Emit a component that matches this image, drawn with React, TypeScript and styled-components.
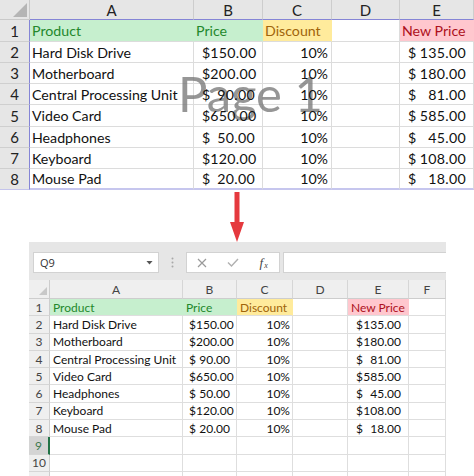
import React from 'react';
import styled, { createGlobalStyle } from 'styled-components';

const FONT = `Lato, "Open Sans", Arial, sans-serif`;

const GlobalStyle = createGlobalStyle`
  html, body { margin: 0; padding: 0; background: #ffffff; }
  body { font-family: ${FONT}; }
`;

type Row = { name: string; price: string; disc: string; np: string };

const ROWS: Row[] = [
  { name: 'Hard Disk Drive', price: '150.00', disc: '10%', np: '135.00' },
  { name: 'Motherboard', price: '200.00', disc: '10%', np: '180.00' },
  { name: 'Central Processing Unit', price: '90.00', disc: '10%', np: '81.00' },
  { name: 'Video Card', price: '650.00', disc: '10%', np: '585.00' },
  { name: 'Headphones', price: '50.00', disc: '10%', np: '45.00' },
  { name: 'Keyboard', price: '120.00', disc: '10%', np: '108.00' },
  { name: 'Mouse Pad', price: '20.00', disc: '10%', np: '18.00' },
];

const GOOD = { bg: '#c6efce', fg: '#23882c' };
const NEUTRAL = { bg: '#ffeb9c', fg: '#a0640a' };
const BAD = { bg: '#ffc7ce', fg: '#ad1020' };

const PURPLE = '#8585d6';

const Page = styled.div`
  width: 474px;
  height: 476px;
  overflow: hidden;
  background: #ffffff;
  display: flex;
  flex-direction: column;
  font-family: ${FONT};
  color: #111;
`;

/* ---------- top sheet (page break preview) ---------- */

const TopGrid = styled.div`
  position: relative;
  display: grid;
  grid-template-columns: 30px 164px 69px 69px 68px 74px;
  grid-template-rows: 20px 22px 21px 21px 21px 22px 21px 21px 21px;
  font-size: 14.2px;
  flex: none;
`;

const TopCorner = styled.div`
  background: #e6e6e6;
  border-right: 1px solid #c9c9c9;
  border-bottom: 1px solid #c9c9c9;
  box-sizing: border-box;
  display: flex;
  align-items: flex-end;
  justify-content: flex-end;
  padding: 0 2px 2px 0;
`;

const Triangle = styled.div<{ $size: number; $color: string }>`
  width: ${(p) => p.$size}px;
  height: ${(p) => p.$size}px;
  background: ${(p) => p.$color};
  clip-path: polygon(100% 0, 100% 100%, 0 100%);
`;

const TopColHead = styled.div`
  background: #e6e6e6;
  border-right: 1px solid #cdcdcd;
  border-bottom: 1px solid ${PURPLE};
  box-sizing: border-box;
  display: flex;
  align-items: center;
  justify-content: center;
  color: #222;
  font-size: 15px;
`;

const TopRowHead = styled.div<{ $last?: boolean }>`
  background: #e6e6e6;
  border-right: 1px solid ${PURPLE};
  border-bottom: 1px solid ${(p) => (p.$last ? '#c4c4ec' : '#cfcfcf')};
  box-sizing: border-box;
  display: flex;
  align-items: center;
  justify-content: center;
  color: #222;
  font-size: 15px;
`;

type Align = 'left' | 'right' | 'acct';

const Cell = styled.div<{
  $fill?: string;
  $fg?: string;
  $align?: Align;
  $last?: boolean;
  $padL: number;
  $padR: number;
  $line: string;
}>`
  background: ${(p) => p.$fill ?? '#ffffff'};
  color: ${(p) => p.$fg ?? '#111'};
  border-right: 1px solid ${(p) => p.$fill ?? p.$line};
  border-bottom: ${(p) => (p.$last ? `2px solid #c6c6ee` : `1px solid ${p.$line}`)};
  box-sizing: border-box;
  display: flex;
  align-items: center;
  justify-content: ${(p) =>
    p.$align === 'right' ? 'flex-end' : p.$align === 'acct' ? 'space-between' : 'flex-start'};
  padding: 0 ${(p) => p.$padR}px 0 ${(p) => p.$padL}px;
  white-space: nowrap;
`;

/* text sits above the watermark, cell fills below it */
const CellText = styled.span<{ $num?: boolean }>`
  position: relative;
  z-index: 1;
  letter-spacing: ${(p) => (p.$num ? '0.3px' : 'normal')};
`;

const Watermark = styled.div`
  position: absolute;
  left: 178px;
  top: 69px;
  font-size: 49px;
  line-height: 1;
  color: rgba(120, 120, 120, 0.78);
  pointer-events: none;
  z-index: 0;
  white-space: nowrap;
`;

/* ---------- arrow ---------- */

const ArrowRow = styled.div`
  height: 52px;
  flex: none;
  display: flex;
  padding-left: 229px;
`;

/* ---------- lower (normal view) ---------- */

const Lower = styled.div`
  margin-left: 29px;
  width: 417px;
  display: flex;
  flex-direction: column;
  flex: none;
`;

const FormulaBar = styled.div`
  height: 38px;
  background: #e6e6e6;
  box-sizing: border-box;
  padding: 10px 0 0 4px;
  display: flex;
  align-items: flex-start;
`;

const NameBox = styled.div`
  width: 126px;
  height: 21px;
  box-sizing: border-box;
  background: #ffffff;
  border: 1px solid #d2d2d2;
  display: flex;
  align-items: center;
  justify-content: space-between;
  padding: 0 5px 0 6px;
  font-family: "Open Sans", Arial, sans-serif;
  font-size: 11px;
  color: #333;
`;

const DropTri = styled.span`
  width: 7px;
  height: 4px;
  background: #555;
  clip-path: polygon(0 0, 100% 0, 50% 100%);
`;

const Grip = styled.div`
  width: 27px;
  height: 21px;
  display: flex;
  align-items: center;
  justify-content: center;
`;

const FxButtons = styled.div`
  width: 94px;
  height: 21px;
  box-sizing: border-box;
  background: #ffffff;
  border: 1px solid #d2d2d2;
  display: grid;
  grid-template-columns: repeat(3, 1fr);
  align-items: center;
  justify-items: center;
`;

const FxLabel = styled.span`
  font-family: "Liberation Serif", "DejaVu Serif", serif;
  font-style: italic;
  font-size: 13px;
  color: #444;
  line-height: 1;
  display: flex;
  align-items: baseline;
  & > sub {
    font-size: 8px;
    vertical-align: baseline;
    margin-left: 1px;
    position: relative;
    top: 1px;
  }
`;

const FormulaInput = styled.div`
  flex: 1;
  margin-left: 3px;
  height: 21px;
  box-sizing: border-box;
  background: #ffffff;
  border: 1px solid #d2d2d2;
  border-right: none;
`;

const LowGrid = styled.div`
  display: grid;
  grid-template-columns: 21px 133px 54px 56px 55px 61px 37px;
  grid-template-rows: 19px repeat(11, 17.3px);
  font-size: 12px;
`;

const LowCorner = styled.div`
  background: #efefef;
  border-right: 1px solid #cdcdcd;
  border-bottom: 1px solid #cdcdcd;
  box-sizing: border-box;
  display: flex;
  align-items: flex-end;
  justify-content: flex-end;
  padding: 0 2px 3px 0;
`;

const LowColHead = styled.div`
  background: #efefef;
  border-right: 1px solid #d6d6d6;
  border-bottom: 1px solid #cdcdcd;
  box-sizing: border-box;
  display: flex;
  align-items: center;
  justify-content: center;
  color: #444;
  font-size: 12px;
`;

const LowRowHead = styled.div<{ $selected?: boolean }>`
  background: ${(p) => (p.$selected ? '#d4d4d4' : '#efefef')};
  color: ${(p) => (p.$selected ? '#3f7a4f' : '#444')};
  border-right: ${(p) => (p.$selected ? '2px solid #217346' : '1px solid #cdcdcd')};
  border-bottom: 1px solid #d6d6d6;
  box-sizing: border-box;
  display: flex;
  align-items: center;
  justify-content: center;
  font-size: 12px;
`;

/* ---------- helpers ---------- */

type Metrics = { textL: number; numR: number; acctL: number; acctR: number; line: string; num: boolean };

const TOP_M: Metrics = { textL: 2, numR: 3, acctL: 8, acctR: 7, line: '#dcdcdc', num: true };
const LOW_M: Metrics = { textL: 3, numR: 2, acctL: 6, acctR: 6, line: '#dedede', num: false };
const LOW_E: Metrics = { ...LOW_M, acctL: 8, acctR: 7 };

function BodyCells({ row, m, mE, last, extraCols }: { row: Row | null; m: Metrics; mE: Metrics; last?: boolean; extraCols: number }) {
  const common = { $line: m.line, $last: last };
  return (
    <>
      <Cell {...common} $padL={m.textL} $padR={0}>
        {row && <CellText>{row.name}</CellText>}
      </Cell>
      <Cell {...common} $align="acct" $padL={m.acctL} $padR={m.acctR}>
        {row && <CellText>$</CellText>}
        {row && <CellText $num={m.num}>{row.price}</CellText>}
      </Cell>
      <Cell {...common} $align="right" $padL={0} $padR={m.numR}>
        {row && <CellText>{row.disc}</CellText>}
      </Cell>
      <Cell {...common} $padL={0} $padR={0} />
      <Cell {...common} $align="acct" $padL={mE.acctL} $padR={mE.acctR}>
        {row && <CellText>$</CellText>}
        {row && <CellText $num={m.num}>{row.np}</CellText>}
      </Cell>
      {Array.from({ length: extraCols }).map((_, i) => (
        <Cell key={i} {...common} $padL={0} $padR={0} />
      ))}
    </>
  );
}

function HeaderCells({ m, extraCols }: { m: Metrics; extraCols: number }) {
  return (
    <>
      <Cell $line={m.line} $fill={GOOD.bg} $fg={GOOD.fg} $padL={m.textL} $padR={0}>
        <CellText>Product</CellText>
      </Cell>
      <Cell $line={m.line} $fill={GOOD.bg} $fg={GOOD.fg} $padL={m.textL} $padR={0}>
        <CellText>Price</CellText>
      </Cell>
      <Cell $line={m.line} $fill={NEUTRAL.bg} $fg={NEUTRAL.fg} $padL={m.textL} $padR={0}>
        <CellText>Discount</CellText>
      </Cell>
      <Cell $line={m.line} $padL={0} $padR={0} />
      <Cell $line={m.line} $fill={BAD.bg} $fg={BAD.fg} $padL={m.textL} $padR={0}>
        <CellText>New Price</CellText>
      </Cell>
      {Array.from({ length: extraCols }).map((_, i) => (
        <Cell key={i} $line={m.line} $padL={0} $padR={0} />
      ))}
    </>
  );
}

export default function App() {
  const topCols = ['A', 'B', 'C', 'D', 'E'];
  const lowCols = ['A', 'B', 'C', 'D', 'E', 'F'];
  return (
    <>
      <GlobalStyle />
      <Page>
        <TopGrid>
          <TopCorner>
            <Triangle $size={14} $color="#b5b5b5" />
          </TopCorner>
          {topCols.map((c) => (
            <TopColHead key={c}>{c}</TopColHead>
          ))}
          <TopRowHead>1</TopRowHead>
          <HeaderCells m={TOP_M} extraCols={0} />
          {ROWS.map((r, i) => (
            <React.Fragment key={r.name}>
              <TopRowHead $last={i === ROWS.length - 1}>{i + 2}</TopRowHead>
              <BodyCells row={r} m={TOP_M} mE={TOP_M} last={i === ROWS.length - 1} extraCols={0} />
            </React.Fragment>
          ))}
          <Watermark>Page 1</Watermark>
        </TopGrid>

        <ArrowRow>
          <svg width="16" height="52" viewBox="0 0 16 52">
            <rect x="5.5" y="2" width="5" height="33" fill="#e5393e" />
            <polygon points="1,32 15,32 8,52" fill="#e5393e" />
          </svg>
        </ArrowRow>

        <Lower>
          <FormulaBar>
            <NameBox>
              <span>Q9</span>
              <DropTri />
            </NameBox>
            <Grip>
              <svg width="3" height="11" viewBox="0 0 3 11">
                <circle cx="1.5" cy="1.5" r="1" fill="#a8a8a8" />
                <circle cx="1.5" cy="5.5" r="1" fill="#a8a8a8" />
                <circle cx="1.5" cy="9.5" r="1" fill="#a8a8a8" />
              </svg>
            </Grip>
            <FxButtons>
              <svg width="10" height="10" viewBox="0 0 10 10">
                <path d="M1 1 L9 9 M9 1 L1 9" stroke="#9a9a9a" strokeWidth="1.2" fill="none" />
              </svg>
              <svg width="12" height="9" viewBox="0 0 12 9">
                <path d="M1 4.5 L4.5 8 L11 1" stroke="#b0b0b0" strokeWidth="1.4" fill="none" />
              </svg>
              <FxLabel>
                f<sub>x</sub>
              </FxLabel>
            </FxButtons>
            <FormulaInput />
          </FormulaBar>

          <LowGrid>
            <LowCorner>
              <Triangle $size={8} $color="#c8c8c8" />
            </LowCorner>
            {lowCols.map((c) => (
              <LowColHead key={c}>{c}</LowColHead>
            ))}
            <LowRowHead>1</LowRowHead>
            <HeaderCells m={LOW_M} extraCols={1} />
            {ROWS.map((r, i) => (
              <React.Fragment key={r.name}>
                <LowRowHead>{i + 2}</LowRowHead>
                <BodyCells row={r} m={LOW_M} mE={LOW_E} extraCols={1} />
              </React.Fragment>
            ))}
            {[9, 10, 11].map((n) => (
              <React.Fragment key={n}>
                <LowRowHead $selected={n === 9}>{n < 11 ? n : ''}</LowRowHead>
                <BodyCells row={null} m={LOW_M} mE={LOW_E} extraCols={1} />
              </React.Fragment>
            ))}
          </LowGrid>
        </Lower>
      </Page>
    </>
  );
}
